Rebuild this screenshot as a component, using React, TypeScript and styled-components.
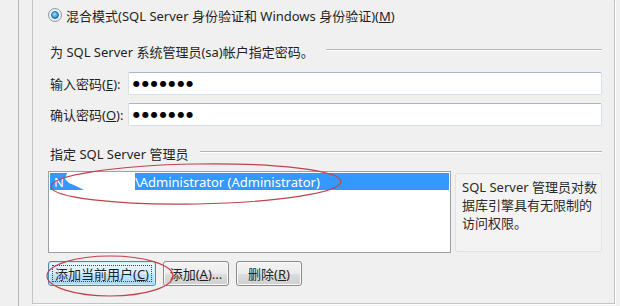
import React from "react";
import styled, { createGlobalStyle } from "styled-components";

const Global = createGlobalStyle`
  html, body {
    margin: 0;
    padding: 0;
    width: 620px;
    height: 306px;
    overflow: hidden;
    background: #f0f0f0;
  }
  body {
    font-family: "Noto Sans", "Noto Sans CJK SC", sans-serif;
    font-size: 13px;
    color: #1f1f1f;
  }
`;

const Page = styled.div`
  position: relative;
  display: flex;
  width: 620px;
  height: 306px;
  background: #f0f0f0;
`;

const Edge = styled.div`
  flex: 0 0 18px;
  border-right: 1px solid #b4b4b4;
`;

const Group = styled.div`
  margin-left: 13px;
  flex: 0 0 583px;
  height: 304px;
  box-sizing: border-box;
  border: 1px solid #c4c4c4;
  border-top: none;
  box-shadow: 1px 1px 0 #ffffff;
  padding: 0 12px 0 15px;
  display: flex;
  flex-direction: column;
`;

const RadioRow = styled.div`
  margin-top: 6px;
  height: 18px;
  display: flex;
  align-items: center;
  gap: 4px;
  white-space: nowrap;
`;

const Radio = styled.span`
  position: relative;
  width: 12px;
  height: 12px;
  border-radius: 50%;
  border: 1px solid #8a9aa8;
  background: radial-gradient(circle at 50% 40%, #ffffff 0%, #e6edf2 70%, #cfd9e1 100%);
  flex-shrink: 0;
  &::after {
    content: "";
    position: absolute;
    left: 2px;
    top: 2px;
    width: 6px;
    height: 6px;
    border-radius: 50%;
    border: 1px solid #1e6b9a;
    background: radial-gradient(circle at 40% 35%, #a6e0ff 0%, #3a9ad6 60%, #1b6aa0 100%);
  }
`;

const Header = styled.div<{ $top: number }>`
  margin-top: ${(p) => p.$top}px;
  height: 18px;
  display: flex;
  align-items: center;
  gap: 12px;
  padding-left: 2px;
  white-space: nowrap;
`;

const Rule = styled.div`
  flex: 1;
  height: 0;
  border-top: 1px solid #b5b5b5;
  border-bottom: 1px solid #ffffff;
  margin-top: -2px;
`;

const FieldRow = styled.div<{ $top: number }>`
  margin-top: ${(p) => p.$top}px;
  height: 23px;
  display: flex;
  align-items: center;
`;

const FieldLabel = styled.label`
  flex: 0 0 80px;
  padding-left: 2px;
  box-sizing: border-box;
  white-space: nowrap;
`;

const TextBox = styled.div`
  flex: 1;
  height: 23px;
  box-sizing: border-box;
  background: #ffffff;
  border: 1px solid #d6e0e8;
  border-top-color: #a7b6c4;
  border-radius: 2px;
  display: flex;
  align-items: center;
  padding-left: 4px;
`;

const Dots = styled.span`
  font-family: "DejaVu Sans", sans-serif;
  font-size: 8px;
  letter-spacing: 1.9px;
  color: #000;
`;

const ListArea = styled.div`
  margin-top: 9px;
  height: 82px;
  display: flex;
  gap: 4px;
`;

const ListBox = styled.div`
  flex: 0 0 403px;
  box-sizing: border-box;
  background: #ffffff;
  border: 1px solid #9aa0a6;
  padding: 1px;
`;

const ListItem = styled.div<{ $selected?: boolean }>`
  position: relative;
  height: 17px;
  display: flex;
  align-items: center;
  padding-left: 4px;
  white-space: nowrap;
  background: ${(p) => (p.$selected ? "#3399ff" : "transparent")};
  color: ${(p) => (p.$selected ? "#ffffff" : "#1f1f1f")};
`;

const Redact = styled.svg`
  flex: 0 0 71px;
  width: 71px;
  height: 17px;
  display: block;
`;

const Desc = styled.div`
  flex: 0 0 147px;
  box-sizing: border-box;
  margin-top: 2px;
  height: 79px;
  background: #f3f3f3;
  border: 1px solid #e2e2e2;
  border-radius: 2px;
  padding: 4px 0 0 6px;
  line-height: 18px;
  color: #2a2a2a;
`;

const Buttons = styled.div`
  margin-top: 8px;
  display: flex;
  gap: 7px;
`;

const Button = styled.button<{ $w: number; $focus?: boolean }>`
  position: relative;
  width: ${(p) => p.$w}px;
  height: 25px;
  box-sizing: border-box;
  padding: 0;
  font: inherit;
  color: #1f1f1f;
  border-radius: 3px;
  border: 1px solid ${(p) => (p.$focus ? "#3c8cbc" : "#8a8a8a")};
  background: ${(p) =>
    p.$focus
      ? "linear-gradient(#eaf6fd 0%, #d9f0fc 50%, #bee6fd 52%, #a7d9f5 100%)"
      : "linear-gradient(#f4f4f4 0%, #ebebeb 50%, #dddddd 52%, #cfcfcf 100%)"};
  box-shadow: inset 0 0 0 1px ${(p) => (p.$focus ? "#cdeefc" : "#fbfbfb")};
  white-space: nowrap;
  &::after {
    content: "";
    display: ${(p) => (p.$focus ? "block" : "none")};
    position: absolute;
    inset: 3px;
    border: 1px dotted #444;
  }
`;

const Overlay = styled.svg`
  position: absolute;
  left: 0;
  top: 0;
  width: 620px;
  height: 306px;
  pointer-events: none;
`;

export default function App() {
  return (
    <>
      <Global />
      <Page>
        <Edge />
        <Group>
          <RadioRow>
            <Radio />
            <span>
              混合模式(SQL Server 身份验证和 Windows 身份验证)(<u>M</u>)
            </span>
          </RadioRow>
          <Header $top={18}>
            <span>为 SQL Server 系统管理员(sa)帐户指定密码。</span>
            <Rule />
          </Header>
          <FieldRow $top={12}>
            <FieldLabel>
              输入密码(<u>E</u>):
            </FieldLabel>
            <TextBox>
              <Dots>●●●●●●●</Dots>
            </TextBox>
          </FieldRow>
          <FieldRow $top={8}>
            <FieldLabel>
              确认密码(<u>O</u>):
            </FieldLabel>
            <TextBox>
              <Dots>●●●●●●●</Dots>
            </TextBox>
          </FieldRow>
          <Header $top={18}>
            <span>指定 SQL Server 管理员</span>
            <Rule />
          </Header>
          <ListArea>
            <ListBox>
              <ListItem $selected>
                <span>N</span>
                <Redact viewBox="0 0 71 17">
                  <path
                    d="M3 0 L71 0 L72 17 L20 17 L12 13 L5 10 L1 6 Z"
                    fill="#ffffff"
                  />
                </Redact>
                <span>\Administrator (Administrator)</span>
              </ListItem>
            </ListBox>
            <Desc>
              SQL Server 管理员对数
              <br />
              据库引擎具有无限制的
              <br />
              访问权限。
            </Desc>
          </ListArea>
          <Buttons>
            <Button $w={108} $focus>
              添加当前用户(<u>C</u>)
            </Button>
            <Button $w={66}>
              添加(<u>A</u>)...
            </Button>
            <Button $w={66}>
              删除(<u>R</u>)
            </Button>
          </Buttons>
        </Group>
        <Overlay viewBox="0 0 620 306">
          <ellipse
            cx="196"
            cy="184"
            rx="145"
            ry="20"
            fill="none"
            stroke="#c0424c"
            strokeWidth="1.2"
            transform="rotate(-1 196 184)"
          />
          <ellipse
            cx="110"
            cy="276"
            rx="63"
            ry="20"
            fill="none"
            stroke="#c0424c"
            strokeWidth="1.2"
          />
        </Overlay>
      </Page>
    </>
  );
}
